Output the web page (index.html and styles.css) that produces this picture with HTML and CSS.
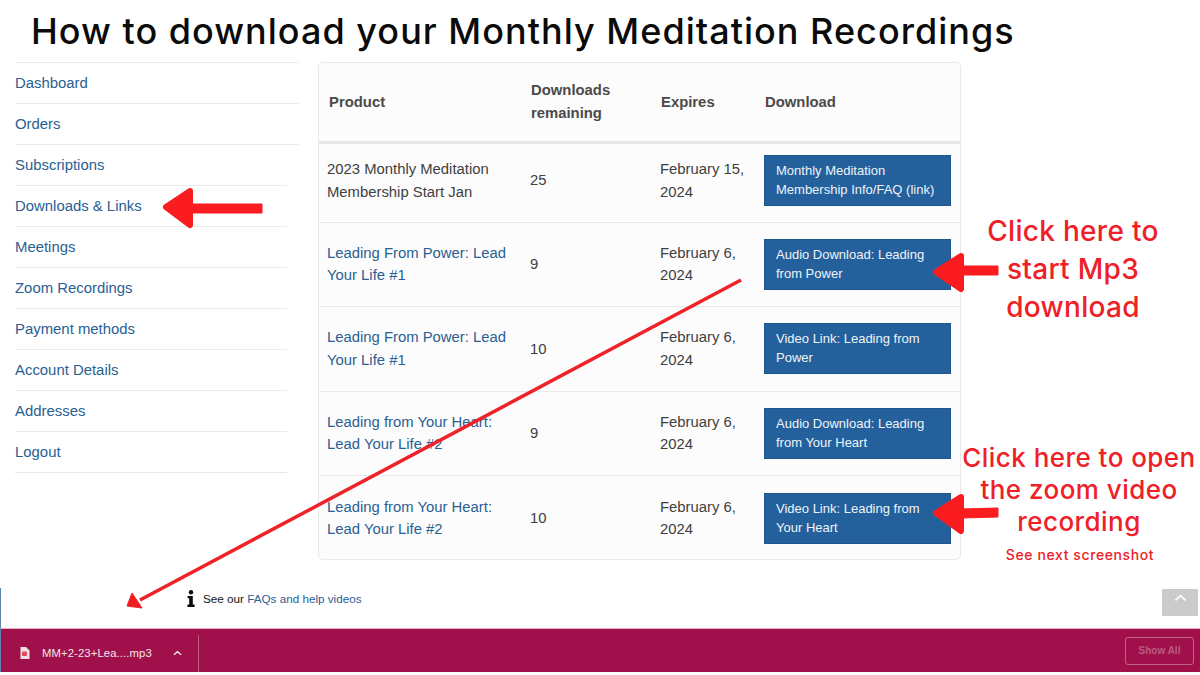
FILE: index.html
```html
<!DOCTYPE html>
<html lang="en">
<head>
<meta charset="utf-8">
<title>How to download your Monthly Meditation Recordings</title>
<link rel="stylesheet" href="styles.css">
</head>
<body>
<div class="page">
  <h1 class="title">How to download your Monthly Meditation Recordings</h1>
  <div class="content">
    <nav class="side">
      <a class="nav-item wide" href="#">Dashboard</a>
      <a class="nav-item wide" href="#">Orders</a>
      <a class="nav-item wide" href="#">Subscriptions</a>
      <a class="nav-item" href="#">Downloads &amp; Links</a>
      <a class="nav-item" href="#">Meetings</a>
      <a class="nav-item" href="#">Zoom Recordings</a>
      <a class="nav-item" href="#">Payment methods</a>
      <a class="nav-item" href="#">Account Details</a>
      <a class="nav-item" href="#">Addresses</a>
      <a class="nav-item" href="#">Logout</a>
    </nav>
    <div class="card">
      <table class="tbl">
        <thead>
          <tr><th class="c1">Product</th><th class="c2">Downloads remaining</th><th class="c3">Expires</th><th class="c4">Download</th></tr>
        </thead>
        <tbody>
          <tr class="r1"><td>2023 Monthly Meditation Membership Start Jan</td><td>25</td><td>February 15, 2024</td><td><a class="btn" href="#">Monthly Meditation Membership Info/FAQ (link)</a></td></tr>
          <tr><td><a class="lnk" href="#">Leading From Power: Lead Your Life #1</a></td><td>9</td><td>February 6, 2024</td><td><a class="btn" href="#">Audio Download: Leading from Power</a></td></tr>
          <tr><td><a class="lnk" href="#">Leading From Power: Lead Your Life #1</a></td><td>10</td><td>February 6, 2024</td><td><a class="btn" href="#">Video Link: Leading from Power</a></td></tr>
          <tr><td><a class="lnk" href="#">Leading from Your Heart: Lead Your Life #2</a></td><td>9</td><td>February 6, 2024</td><td><a class="btn" href="#">Audio Download: Leading from Your Heart</a></td></tr>
          <tr><td><a class="lnk" href="#">Leading from Your Heart: Lead Your Life #2</a></td><td>10</td><td>February 6, 2024</td><td><a class="btn" href="#">Video Link: Leading from Your Heart</a></td></tr>
        </tbody>
      </table>
    </div>
  </div>
  <div class="help">
    <svg class="info" viewBox="0 0 8 17" aria-hidden="true"><circle cx="4" cy="2.2" r="2.2"/><path d="M0.6 6h5.2v8.6H7.6V17H0.4v-2.4h1.8V8.300H0.600z"/></svg>
    <span>See our <a href="#">FAQs and help videos</a></span>
  </div>
  <div class="to-top"><svg viewBox="0 0 14 8" aria-hidden="true"><path d="M1.500 6.500L7 1.500l5.500 5" fill="none" stroke="#fff" stroke-width="2"/></svg></div>
  <footer class="bar">
    <div class="dl">
      <svg class="file" viewBox="0 0 10 12" aria-hidden="true"><path d="M1 0h5.500L10 3.500V12H1z" fill="#f3dfe4"/><rect x="2.500" y="4.500" width="5" height="4.500" rx="1" fill="#dc4a5c"/></svg>
      <span class="fname">MM+2-23+Lea....mp3</span>
      <svg class="caret" viewBox="0 0 10 6" aria-hidden="true"><path d="M1 5l4-3.500L9 5" fill="none" stroke="#f5e6ea" stroke-width="1.500"/></svg>
    </div>
    <button class="show">Show All</button>
  </footer>

  <svg class="arrows" viewBox="0 0 1200 675" aria-hidden="true">
    <g fill="#fb1c20" stroke="#fb1c20" stroke-linejoin="round">
      <path d="M262 204v9h-73v-9z" stroke-width="1"/>
      <path d="M190 191L166 207l24 18z" stroke-width="6"/>
      <path d="M998 266v9h-37v-9z" stroke-width="1"/>
      <path d="M961 256L936 272l25 17z" stroke-width="6"/>
      <path d="M998 508v9l-37 1v-9z" stroke-width="1"/>
      <path d="M961 497L936 513l25 18z" stroke-width="6"/>
    </g>
    <path d="M741 280L140 600" stroke="#ee2228" stroke-width="3.500" fill="none"/>
    <path d="M127 606L132 593l10 15z" fill="#f21c22" stroke="#f21c22" stroke-width="1" stroke-linejoin="round"/>
  </svg>
  <p class="note n1">Click here to<br>start Mp3<br>download</p>
  <p class="note n2">Click here to open<br>the zoom video<br>recording</p>
  <p class="note n3">See next screenshot</p>
</div>
</body>
</html>
```
FILE: styles.css
```css
* { box-sizing: border-box; }
html, body { margin: 0; padding: 0; background: #fff; }
.page {
  position: relative;
  width: 1200px;
  height: 675px;
  overflow: hidden;
  font-family: "Liberation Sans", Arial, sans-serif;
  background: #fff;
}
.title {
  margin: 0;
  height: 62px;
  padding: 9px 0 0 31px;
  font: 500 36px/44px Inter, "Open Sans", sans-serif;
  letter-spacing: 1.02px;
  color: #0b0b0b;
  white-space: nowrap;
}
.content {
  display: flex;
  align-items: flex-start;
  padding-left: 15px;
  height: 498px;
}
.side {
  display: flex;
  flex-direction: column;
  flex: none;
  width: 272px;
  margin-right: 31px;
  border-bottom: 1px solid #e8e8e8;
}
.nav-item {
  display: flex;
  align-items: center;
  height: 41px;
  width: 272px;
  border-top: 1px solid #ebebeb;
  padding-bottom: 1px;
  font-size: 14.900px;
  color: #2a6093;
  text-decoration: none;
}
.nav-item.wide { width: 284px; }
.card {
  width: 643px;
  height: 498px;
  background: #fcfcfc;
  border: 1px solid #e9e9e9;
  border-radius: 5px;
  overflow: hidden;
}
.tbl {
  width: 100%;
  border-collapse: collapse;
  table-layout: fixed;
  font-size: 14.850px;
  line-height: 22.300px;
  color: #3f3f3f;
}
.tbl th {
  height: 79px;
  padding: 0 0 0 10px;
  text-align: left;
  font-weight: 700;
  color: #4a4a4a;
  border-bottom: 3px solid #e6e6e6;
}
.c1 { width: 202px; }
.c2 { width: 130px; }
.c3 { width: 104px; }
.tbl td {
  padding: 0 10px 0 9px;
  border-top: 1px solid #e9e9e9;
  vertical-align: middle;
  height: 84.500px;
}
.tbl td:first-child { padding-left: 8px; }
.tbl tbody tr:first-child td { border-top: 0; height: 80px; padding-bottom: 4px; }
.lnk { color: #2a6093; text-decoration: none; }
.btn {
  display: block;
  width: 187px;
  height: 51px;
  padding: 5px 10px 0 11px;
  background: #24619c;
  border: 1px solid #1f5588;
  color: #eef3f8;
  font-size: 13px;
  line-height: 19px;
  text-decoration: none;
}
.help {
  position: relative;
  display: flex;
  align-items: center;
  gap: 8px;
  padding: 8px 0 0 187px;
  font-size: 11.700px;
  color: #151515;
  height: 68px;
}
.help::before {
  content: "";
  position: absolute;
  left: 0;
  top: 28px;
  bottom: 0;
  width: 1px;
  background: #5f86ab;
}
.help a { color: #2a6093; text-decoration: none; }
.info { width: 8px; height: 17px; fill: #0c0c0c; }
.to-top {
  position: absolute;
  left: 1162px;
  top: 589px;
  width: 36px;
  height: 27px;
  background: #cbcbcb;
  display: flex;
  justify-content: center;
  padding-top: 5px;
}
.to-top svg { width: 13px; height: 8px; }
.bar {
  display: flex;
  align-items: center;
  justify-content: space-between;
  height: 44px;
  background: #a0114b;
  border-top: 1px solid #e9a9c4;
  border-left: 1px solid #5f86ab;
  padding: 0 6px 0 0;
  color: #f3e7ec;
}
.dl {
  display: flex;
  align-items: center;
  align-self: flex-end;
  height: 37px;
  width: 198px;
  border-right: 1px solid #bd5b80;
  padding: 0 0 2px 18px;
  font-size: 11.300px;
}
.file { width: 11px; height: 12px; margin-right: 12px; }
.fname { letter-spacing: .1px; white-space: nowrap; }
.caret { width: 9px; height: 6px; margin-left: 21px; }
.show {
  width: 69px;
  height: 28px;
  background: none;
  border: 1px solid #c2628a;
  border-radius: 3px;
  color: #b95c84;
  font: 700 10px "Liberation Sans", Arial, sans-serif;
}
.arrows {
  position: absolute;
  left: 0;
  top: 0;
  width: 1200px;
  height: 675px;
  pointer-events: none;
}
.note {
  position: absolute;
  margin: 0;
  text-align: center;
  color: #ee2028;
  font-family: Inter, "Open Sans", sans-serif;
  font-weight: 500;
  white-space: nowrap;
}
.n1 { left: 973px; top: 212px; width: 200px; font-size: 28px; line-height: 38px; letter-spacing: .3px; }
.n2 { left: 959px; top: 442px; width: 240px; font-size: 26px; line-height: 32px; letter-spacing: .45px; }
.n3 { left: 980px; top: 546px; width: 200px; font-size: 14px; line-height: 18px; letter-spacing: .6px; }
```
